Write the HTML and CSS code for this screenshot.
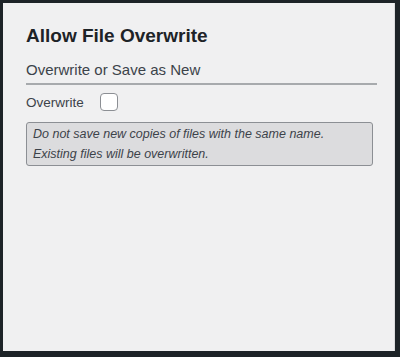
FILE: index.html
```html
<!DOCTYPE html>
<html lang="en">
<head>
    <meta charset="UTF-8">
    <meta name="viewport" content="width=device-width, initial-scale=1.0">
    <title>Allow File Overwrite</title>
    <link rel="stylesheet" href="styles.css">
</head>
<body>
    <div class="panel">
        <h2 class="panel-title">Allow File Overwrite</h2>

        <div class="section-title">Overwrite or Save as New</div>

        <label class="field">
            <span class="field-label">Overwrite</span>
            <span class="checkbox"></span>
        </label>

        <div class="description">
            Do not save new copies of files with the same name.<br>
            Existing files will be overwritten.
        </div>
    </div>
</body>
</html>
```

FILE: styles.css
```css
html, body {
    margin: 0;
    padding: 0;
    height: 100%;
}

body {
    font-family: "Liberation Sans", Arial, sans-serif;
    background-color: #1d2327;
    padding: 3px 5px 6px 3px;
    box-sizing: border-box;
}

.panel {
    height: 100%;
    box-sizing: border-box;
    background-color: #f0f0f1;
    border-right: 1px solid #dcdcde;
    padding: 21px 17px 0 23px;
}

.panel-title {
    margin: 0;
    font-size: 19px;
    font-weight: bold;
    color: #1d2327;
    line-height: 24px;
}

.section-title {
    margin: 12px 0 0 0;
    padding-bottom: 3px;
    font-size: 15px;
    line-height: 20px;
    color: #3c434a;
    border-bottom: 2px solid #a7aaad;
}

.field {
    display: flex;
    align-items: center;
    margin-top: 8px;
}

.field-label {
    font-size: 13.5px;
    color: #3c434a;
    margin-right: 16px;
}

.checkbox {
    width: 16px;
    height: 16px;
    border: 1px solid #8c8f94;
    border-radius: 4px;
    background: #fff;
}

.description {
    margin: 11px 4px 0 0;
    padding: 1px 6px 1px 6px;
    background-color: #dcdcde;
    border: 1px solid #8c8f94;
    border-radius: 3px;
    font-size: 12.5px;
    font-style: italic;
    line-height: 20px;
    color: #3c434a;
}
```
